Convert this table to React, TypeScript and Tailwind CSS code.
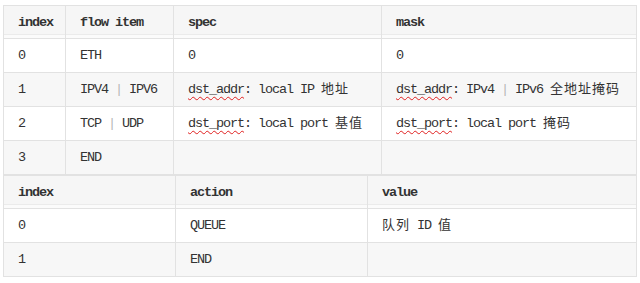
import React from 'react';

type Cell = React.ReactNode;

const Zh = ({ children }: { children: React.ReactNode }) => (
  <span className="text-[13px] tracking-[1px]">{children}</span>
);

const Sq = ({ children }: { children: React.ReactNode }) => (
  <span className="underline decoration-wavy decoration-[#e02020] decoration-1 underline-offset-[3px]">{children}</span>
);

const Bar = () => <span className="text-[#b8b8b8]">|</span>;

const flowCols = [62, 108, 208, 255];
const flowHead = ['index', 'flow item', 'spec', 'mask'];
const flowRows: Cell[][] = [
  ['0', 'ETH', '0', '0'],
  [
    '1',
    <>IPV4 <Bar /> IPV6</>,
    <><Sq>dst_addr</Sq>: local IP <Zh>地址</Zh></>,
    <><Sq>dst_addr</Sq>: IPv4 <Bar /> IPv6 <Zh>全地址掩码</Zh></>,
  ],
  [
    '2',
    <>TCP <Bar /> UDP</>,
    <><Sq>dst_port</Sq>: local port <Zh>基值</Zh></>,
    <><Sq>dst_port</Sq>: local port <Zh>掩码</Zh></>,
  ],
  ['3', 'END', '', ''],
];

const actionCols = [172, 192, 269];
const actionHead = ['index', 'action', 'value'];
const actionRows: Cell[][] = [
  ['0', 'QUEUE', <><Zh>队列</Zh> ID <Zh>值</Zh></>],
  ['1', 'END', ''],
];

const DataTable = ({ cols, head, rows }: { cols: number[]; head: string[]; rows: Cell[][] }) => (
  <table className="table-fixed border-collapse border border-[#dedede]">
    <colgroup>
      {cols.map((w, i) => (
        <col key={i} style={{ width: w }} />
      ))}
    </colgroup>
    <thead>
      <tr className="h-[33px] bg-[#f6f6f6]">
        {head.map((h, i) => (
          <th
            key={i}
            className="border border-[#e2e2e2] pl-[14px] pt-[1px] text-left align-middle font-bold shadow-[inset_0_-3px_0_#fbfbfb,inset_0_-4px_0_#ebebeb]"
          >
            {h}
          </th>
        ))}
      </tr>
    </thead>
    <tbody>
      {rows.map((r, ri) => (
        <tr key={ri} className={`h-[34px] ${ri % 2 === 1 ? 'bg-[#f7f7f7]' : 'bg-white'}`}>
          {r.map((c, ci) => (
            <td key={ci} className="border border-[#e2e2e2] pl-[14px] align-middle whitespace-nowrap">
              {c}
            </td>
          ))}
        </tr>
      ))}
    </tbody>
  </table>
);

export default function App() {
  return (
    <div
      className="w-[640px] h-[283px] overflow-hidden bg-white pl-[3px] pt-[5px] text-[13.5px] tracking-[-1.1px] leading-none text-[#333333]"
      style={{ fontFamily: '"Liberation Mono", "Noto Sans CJK SC", monospace' }}
    >
      <DataTable cols={flowCols} head={flowHead} rows={flowRows} />
      <DataTable cols={actionCols} head={actionHead} rows={actionRows} />
    </div>
  );
}
